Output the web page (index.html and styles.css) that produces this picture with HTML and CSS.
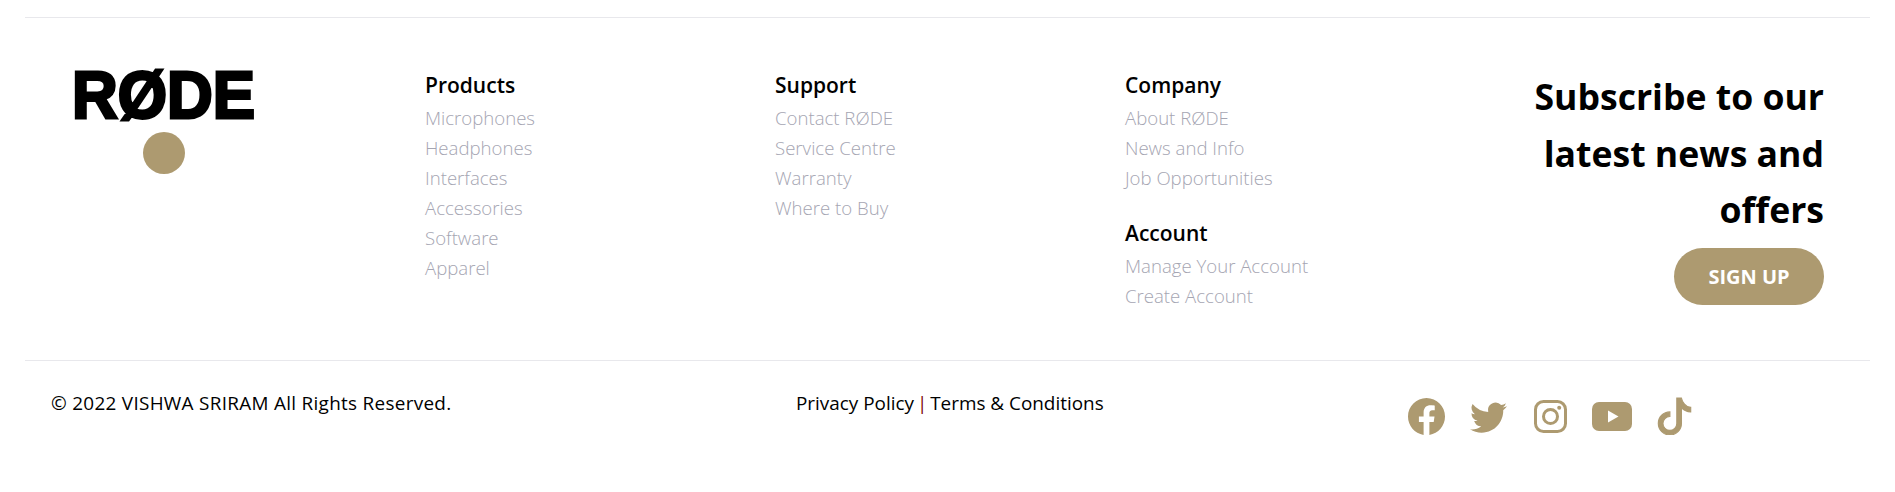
FILE: index.html
```html
<!DOCTYPE html>
<html lang="en">
  <head>
    <meta charset="UTF-8" />
    <meta name="viewport" content="width=device-width, initial-scale=1.0" />
    <title>RØDE footer</title>
    <link rel="stylesheet" href="styles.css">
  </head>
  <body>
    <footer class="footer">
      <div class="footer_top">
        <div class="brand">
          <div class="brand_name">RØDE</div>
          <div class="brand_dot"></div>
        </div>
        <div class="link_col">
          <h4>Products</h4>
          <ul>
            <li><a href="#">Microphones</a></li>
            <li><a href="#">Headphones</a></li>
            <li><a href="#">Interfaces</a></li>
            <li><a href="#">Accessories</a></li>
            <li><a href="#">Software</a></li>
            <li><a href="#">Apparel</a></li>
          </ul>
        </div>
        <div class="link_col">
          <h4>Support</h4>
          <ul>
            <li><a href="#">Contact RØDE</a></li>
            <li><a href="#">Service Centre</a></li>
            <li><a href="#">Warranty</a></li>
            <li><a href="#">Where to Buy</a></li>
          </ul>
        </div>
        <div class="link_col">
          <h4>Company</h4>
          <ul>
            <li><a href="#">About RØDE</a></li>
            <li><a href="#">News and Info</a></li>
            <li><a href="#">Job Opportunities</a></li>
          </ul>
          <h4 class="second">Account</h4>
          <ul>
            <li><a href="#">Manage Your Account</a></li>
            <li><a href="#">Create Account</a></li>
          </ul>
        </div>
        <div class="subscribe">
          <h2>Subscribe to our latest news and offers</h2>
          <a href="#" class="signup">SIGN UP</a>
        </div>
      </div>
      <div class="footer_bottom">
        <p class="copyright">© 2022 VISHWA SRIRAM All Rights Reserved.</p>
        <p><a href="#">Privacy Policy</a> <span class="sep">|</span> <a href="#">Terms &amp; Conditions</a></p>
        <div class="social">
          <a href="#">
            <svg width="37" height="37" viewBox="0 0 16 16"><path d="M16 8.049c0-4.446-3.582-8.05-8-8.05C3.58 0-.002 3.603-.002 8.05c0 4.017 2.926 7.347 6.75 7.951v-5.625h-2.03V8.05H6.75V6.275c0-2.017 1.195-3.131 3.022-3.131.876 0 1.791.157 1.791.157v1.98h-1.009c-.993 0-1.303.621-1.303 1.258v1.51h2.218l-.354 2.326H9.25V16c3.824-.604 6.75-3.934 6.75-7.951z"/></svg>
          </a>
          <a href="#">
            <svg width="37" height="37" viewBox="0 0 16 16"><path d="M5.026 15c6.038 0 9.341-5.003 9.341-9.334 0-.14 0-.282-.006-.422A6.685 6.685 0 0 0 16 3.542a6.658 6.658 0 0 1-1.889.518 3.301 3.301 0 0 0 1.447-1.817 6.533 6.533 0 0 1-2.087.793A3.286 3.286 0 0 0 7.875 6.03a9.325 9.325 0 0 1-6.767-3.429 3.289 3.289 0 0 0 1.018 4.382A3.323 3.323 0 0 1 .64 6.575v.045a3.288 3.288 0 0 0 2.632 3.218 3.203 3.203 0 0 1-.865.115 3.23 3.23 0 0 1-.614-.057 3.283 3.283 0 0 0 3.067 2.277A6.588 6.588 0 0 1 .78 13.58a6.32 6.32 0 0 1-.78-.045A9.344 9.344 0 0 0 5.026 15z"/></svg>
          </a>
          <a href="#">
            <svg width="33" height="33" viewBox="0 0 33 33">
              <rect x="1.5" y="1.5" width="30" height="30" rx="8" class="line" />
              <circle cx="16.5" cy="16.5" r="7" class="line" />
              <circle cx="25.2" cy="7.8" r="2" />
            </svg>
          </a>
          <a href="#">
            <svg width="40" height="29" viewBox="0 0 40 29">
              <rect width="40" height="29" rx="7" />
              <path class="play" d="M16 8.5v12l10.5-6z" />
            </svg>
          </a>
          <a href="#">
            <svg width="37" height="37" viewBox="0 0 16 16"><path class="thick" d="M9 0h1.98c.144.715.54 1.617 1.235 2.512C12.895 3.389 13.797 4 15 4v2c-1.753 0-3.07-.814-4-1.829V11a5 5 0 1 1-5-5v2a3 3 0 1 0 3 3V0Z"/></svg>
          </a>
        </div>
      </div>
    </footer>
  </body>
</html>
```

FILE: styles.css
```css
* {
  margin: 0;
  padding: 0;
  box-sizing: border-box;
}
body {
  background: #fff;
  color: #000;
  font-family: "Open Sans", "Noto Sans", sans-serif;
}
li {
  list-style: none;
}
a {
  color: inherit;
  text-decoration: none;
}
.footer {
  margin: 17px 25px 0;
  border-top: 1px solid #e8e8ec;
}
.footer_top {
  display: grid;
  grid-template-columns: 350px 350px 350px 1fr 330px;
  height: 343px;
  padding: 50px 46px 0 50px;
  border-bottom: 1px solid #e8e8ec;
}
.brand_name {
  width: 194px;
  height: 49px;
  margin: 2px 0 0 -3px;
  font-family: "Liberation Sans", Arial, sans-serif;
  font-size: 67px;
  font-weight: 700;
  line-height: 49px;
  -webkit-text-stroke: 3px #000;
  transform: scaleX(0.945);
  transform-origin: left center;
}
.brand_dot {
  width: 42px;
  height: 42px;
  margin: 13px 0 0 68px;
  border-radius: 50%;
  background: #ad9a70;
}
.link_col h4 {
  font-size: 21px;
  font-weight: 600;
  line-height: 35px;
}
.link_col h4.second {
  margin-top: 23px;
}
.link_col li {
  height: 30px;
  color: #a5a5b2;
  font-size: 18.6px;
  font-weight: 300;
  line-height: 30px;
}
.subscribe {
  text-align: right;
}
.subscribe h2 {
  font-size: 35.6px;
  font-weight: 700;
  line-height: 56.5px;
}
.signup {
  display: inline-block;
  width: 150px;
  height: 57px;
  margin-top: 10px;
  border-radius: 29px;
  background: #ad9a70;
  color: #fff;
  font-size: 20px;
  font-weight: 700;
  line-height: 57px;
  text-align: center;
}
.footer_bottom {
  display: grid;
  grid-template-columns: 745px 599px auto;
  padding: 28px 0 0 26px;
  font-size: 18.9px;
  line-height: 28px;
}
.copyright {
  letter-spacing: 0.3px;
}
.sep {
  margin: 0 -2px;
  color: #800000;
}
.social {
  display: flex;
  align-items: center;
  height: 37px;
  margin-top: 9px;
}
.social a {
  display: flex;
  justify-content: center;
  width: 62px;
}
.social svg {
  flex: none;
  fill: #ad9a70;
  overflow: visible;
}
.social .line {
  fill: none;
  stroke: #ad9a70;
  stroke-width: 3;
}
.social .play {
  fill: #fff;
}
.social .thick {
  stroke: #ad9a70;
  stroke-width: 0.5;
}
```
